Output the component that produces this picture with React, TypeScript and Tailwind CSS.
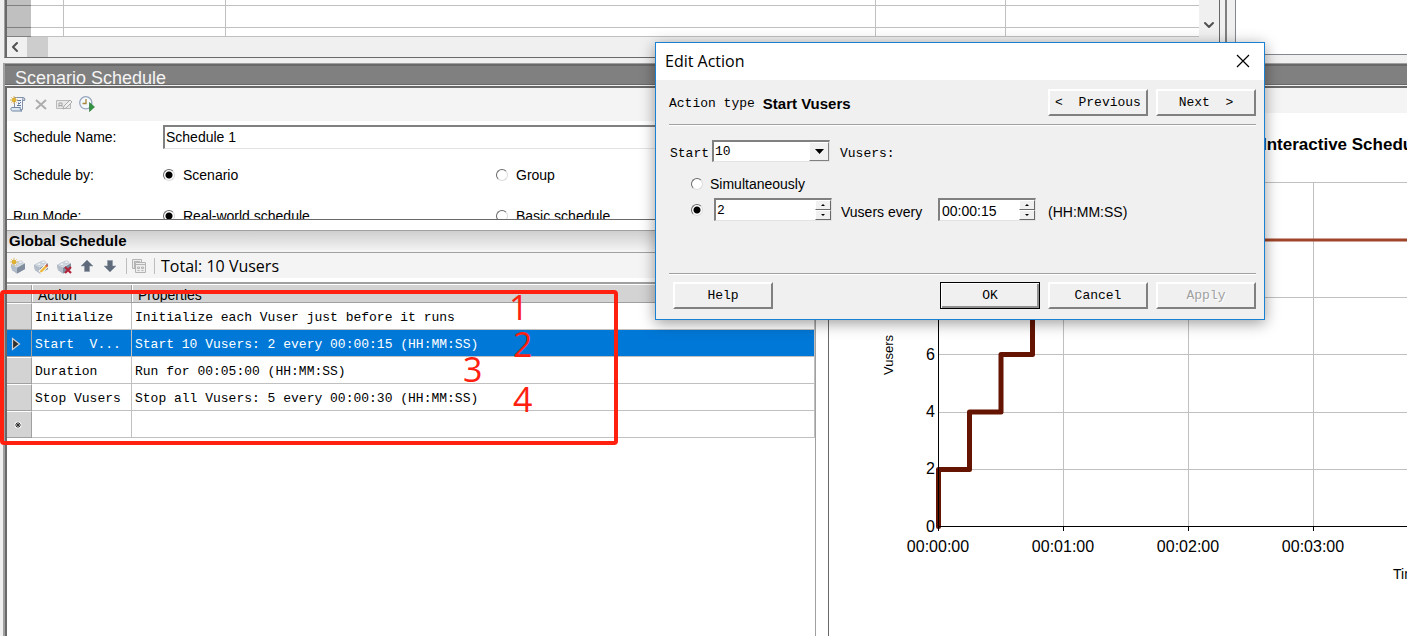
import type { ReactNode } from "react";
import { ChevronDown, ChevronLeft } from "lucide-react";

const mono = "font-['Liberation_Mono',monospace] text-[13px] leading-4";
const raised =
  "border-t-2 border-l-2 border-r-2 border-b-2 border-t-white border-l-white border-r-[#808080] border-b-[#808080]";
const sunken =
  "border-t-2 border-l-2 border-r border-b border-t-[#808080] border-l-[#808080] border-r-[#e3e3e3] border-b-[#e3e3e3]";

const actions = [
  { name: "Initialize", properties: "Initialize each Vuser just before it runs" },
  { name: "Start  V...", properties: "Start 10 Vusers: 2 every 00:00:15 (HH:MM:SS)", selected: true },
  { name: "Duration", properties: "Run for 00:05:00 (HH:MM:SS)" },
  { name: "Stop Vusers", properties: "Stop all Vusers: 5 every 00:00:30 (HH:MM:SS)" },
];

function Star() {
  return (
    <g stroke="#d9a520" strokeWidth="1">
      <path d="M4 0v8M0 4h8M1.4 1.4l5.2 5.2M6.6 1.4L1.4 6.6" stroke="#e0b95a" />
      <circle cx="4" cy="4" r="1.4" fill="#f3c431" />
    </g>
  );
}

function Brick({ children }: { children?: ReactNode }) {
  return (
    <svg width="16" height="16" viewBox="0 0 16 16" fill="none" aria-hidden="true">
      <path d="M1 7l8-4 6 2.500v5.500l-8 4.500-5-3.500z" fill="#8d9bab" />
      <path d="M1 7l8-4 6 2.500-8 4.500z" fill="#d3dae2" />
      <path d="M1 7l6 3v5.500l-5-3.500z" fill="#b3bdc9" />
      <path d="M7 10l8-4.500v5.500l-8 4.500z" fill="#7f8c9d" />
      <ellipse cx="6" cy="6.200" rx="2" ry="1.400" fill="#eef2f6" stroke="#a9b3bf" strokeWidth=".5" />
      <ellipse cx="10.500" cy="4.200" rx="2" ry="1.400" fill="#eef2f6" stroke="#a9b3bf" strokeWidth=".5" />
      {children}
    </svg>
  );
}

function ScrollIcon() {
  return (
    <svg width="16" height="16" viewBox="0 0 16 16" fill="none" aria-hidden="true">
      <path d="M4.500 1.500h9c1.500 0 1.500 3 1 3h-2v9h-8z" fill="#f1f5f9" stroke="#8292ab" />
      <path d="M12.500 4.500v-2c0-1 2-1 2 0v2z" fill="#c5d0de" stroke="#8292ab" strokeWidth=".8" />
      <path d="M2 11.500h8.500c-.8 1.500 0 3.500 1.500 3.500H2.500c-2 0-2-3.500-.5-3.500z" fill="#dde7f1" stroke="#7187a4" />
      <path d="M7 4.500h4M10 6.500h1M7 9.500h4M8 7.500h2M8.500 6.500v2" stroke="#5d7699" />
      <Star />
    </svg>
  );
}

function RenameIcon() {
  return (
    <svg width="16" height="16" viewBox="0 0 16 16" fill="none" aria-hidden="true">
      <path d="M.5 4.500h14v8H.5z" fill="#e8e8e8" stroke="#b9b9b9" />
      <path d="M3 11V7h3v4M3 9.500h3" stroke="#a5a5a5" />
      <path d="M7 13l1-3 6-6 2 2-6 6z" fill="#f0f0f0" stroke="#aaa" />
    </svg>
  );
}

function ClockIcon() {
  return (
    <svg width="16" height="16" viewBox="0 0 16 16" fill="none" aria-hidden="true">
      <circle cx="6.800" cy="6.800" r="6.100" fill="#f4f9fe" stroke="#97a6bd" strokeWidth="1.300" />
      <path d="M7 3v4.500H3.500" stroke="#a5843c" strokeWidth="1.300" />
      <path d="M10.500 6.500l5 4.500-5 4.500z" fill="#2f9440" stroke="#23702f" strokeWidth=".6" />
    </svg>
  );
}

function ArrowIcon({ down }: { down?: boolean }) {
  return (
    <svg width="14" height="14" viewBox="0 0 14 14" className="ml-px" aria-hidden="true">
      <path
        d={down ? "M4.500 1.500h5V7H13l-6 6-6-6h3.500z" : "M4.500 12.500h5V7H13L7 1 1 7h3.500z"}
        fill="#5f6b7b"
        stroke="#8c96a3"
        strokeWidth=".6"
      />
    </svg>
  );
}

function CopyIcon() {
  return (
    <svg width="16" height="16" viewBox="0 0 16 16" fill="none" stroke="#b4b4b4" aria-hidden="true">
      <path d="M1.500 1.500h9v9h-9z" fill="#eee" />
      <path d="M3 3.500h6M3.500 3v7" />
      <path d="M4.500 4.500h10v10h-10z" fill="#eee" />
      <path d="M4.500 6.500h10M6.500 9h2v1.500h-2zM10.500 9h2v1.500h-2zM6.500 12.500h2M10.500 12.500h2" />
    </svg>
  );
}

function ToolButton({ label, children, disabled }: { label: string; children: ReactNode; disabled?: boolean }) {
  return (
    <button type="button" aria-label={label} disabled={disabled} className="flex h-4 w-[23px] items-center">
      {children}
    </button>
  );
}

function Radio({ id, name, checked }: { id: string; name: string; checked?: boolean }) {
  return (
    <input
      id={id}
      name={name}
      type="radio"
      defaultChecked={checked}
      className="m-0 h-3 w-3 shrink-0 appearance-none rounded-full border border-t-[#696969] border-r-[#dcdcdc] border-b-[#dcdcdc] border-l-[#696969] bg-white checked:bg-[radial-gradient(circle,#000_3px,transparent_4px)]"
    />
  );
}

function UpperPanels() {
  return (
    <div className="flex h-[58px] shrink-0 pl-1">
      <div className="flex min-w-0 flex-1 flex-col border-r border-b border-l border-r-[#696969] border-b-[#696969] border-l-[#a0a0a0]">
        <div className="flex min-w-0 flex-1 border-l-2 border-[#696969]">
          <div className="flex min-w-0 flex-1 flex-col">
            <table className="w-full table-fixed border-separate border-spacing-0 bg-white">
              <tbody>
                {["h-[6px]", "h-[22px]", "h-[9px]"].map((height) => (
                  <tr key={height} className={height}>
                    <td className="w-6 border-b border-[#808080] bg-[#c0c0c0] p-0" />
                    <td className="w-[33px] border-r border-b border-[#c0c0c0] p-0" />
                    <td className="w-[162px] border-r border-b border-[#c0c0c0] p-0" />
                    <td className="w-[650px] border-r border-b border-[#c0c0c0] p-0" />
                    <td className="w-[130px] border-r border-b border-[#c0c0c0] p-0" />
                    <td className="border-b border-[#c0c0c0] p-0" />
                  </tr>
                ))}
              </tbody>
            </table>
            <div className="flex flex-1 items-stretch bg-[#f0f0f0]">
              <button type="button" aria-label="Scroll left" className="flex w-5 items-center text-[#505050]">
                <ChevronLeft size={16} strokeWidth={3} />
              </button>
              <div className="w-[21px] bg-[#cdcdcd]" />
            </div>
          </div>
          <div className="flex w-5 items-start justify-center bg-[#f0f0f0] pt-[17px] text-[#505050]">
            <ChevronDown size={16} strokeWidth={3} />
          </div>
        </div>
      </div>
      <div className="ml-[5px] w-2 border-r border-l-2 border-r-[#f0f0f0] border-l-[#808080]" />
      <div className="ml-[2px] h-[55px] w-[172px] border-b border-l border-[#828790] bg-white" />
    </div>
  );
}

function ScheduleForm() {
  return (
    <form className="flex h-[99px] shrink-0 flex-col overflow-hidden border-b border-[#696969] bg-white pt-1 pr-4 pl-[6px] text-[14px] leading-4">
      <div className="flex h-6 shrink-0 items-center">
        <label htmlFor="schedule-name" className="w-[150px]">
          Schedule Name:
        </label>
        <input id="schedule-name" defaultValue="Schedule 1" className={`h-6 min-w-0 flex-1 px-[1px] pb-[2px] ${sunken}`} />
      </div>
      <div className="mt-[14px] flex h-6 shrink-0 items-center">
        <span className="w-[150px]">Schedule by:</span>
        <Radio id="by-scenario" name="by" checked />
        <label htmlFor="by-scenario" className="w-[313px] pl-2">
          Scenario
        </label>
        <span className="w-2" />
        <Radio id="by-group" name="by" />
        <label htmlFor="by-group" className="pl-2">
          Group
        </label>
      </div>
      <div className="mt-[17px] flex h-6 shrink-0 items-center">
        <span className="w-[150px]">Run Mode:</span>
        <Radio id="mode-real" name="mode" checked />
        <label htmlFor="mode-real" className="w-[313px] pl-2">
          Real-world schedule
        </label>
        <span className="w-2" />
        <Radio id="mode-basic" name="mode" />
        <label htmlFor="mode-basic" className="pl-2">
          Basic schedule
        </label>
      </div>
    </form>
  );
}

const headCell = "overflow-hidden border-r border-b border-[#a0a0a0] bg-[#d3d3d3] p-0";
const bodyCell = `border-r border-b border-[#c0c0c0] pt-1 pr-0 pb-0 pl-[3px] whitespace-pre ${mono}`;
const markerCell = "h-[27px] border-t border-r border-b border-r-[#a0a0a0] border-b-[#a0a0a0] p-0";

function ActionTable() {
  return (
    <table className="w-full table-fixed border-separate border-spacing-0 border-t-2 border-[#a0a0a0] pt-[1px] text-left">
      <thead>
        <tr>
          <th className={`w-[25px] ${headCell}`} />
          <th className={`w-[100px] ${headCell}`}>
            <div className="h-[17px] overflow-hidden border-l border-white pl-[5px] text-[14px] leading-5 font-normal">Action</div>
          </th>
          <th className={headCell}>
            <div className="h-[17px] overflow-hidden border-l border-white pl-[5px] text-[14px] leading-5 font-normal">Properties</div>
          </th>
        </tr>
      </thead>
      <tbody>
        {actions.map((row) => (
          <tr key={row.name} className={row.selected ? "bg-[#0078d7] text-white" : "bg-white"}>
            <td className={`${markerCell} ${row.selected ? "border-t-[#0078d7]" : "border-t-white bg-[#d3d3d3]"}`}>
              {row.selected && (
                <svg width="12" height="14" viewBox="0 0 12 14" className="ml-1 block" aria-hidden="true">
                  <path d="M1.500 1.500v11l7-5.500z" fill="#303030" stroke="#d3d3d3" strokeWidth="1.200" />
                </svg>
              )}
            </td>
            <td className={bodyCell}>{row.name}</td>
            <td className={bodyCell}>{row.properties}</td>
          </tr>
        ))}
        <tr>
          <td className={`${markerCell} border-t-white bg-[#d3d3d3]`}>
            <svg width="8" height="8" viewBox="0 0 8 8" className="ml-[7px] block" aria-hidden="true">
              <circle cx="4" cy="4" r="3.500" fill="#f4f4f4" />
              <path d="M4 1v6M1 4h6M2 2l4 4M6 2L2 6" stroke="#303030" />
            </svg>
          </td>
          <td className="border-r border-b border-[#c0c0c0] p-0" />
          <td className="border-r border-b border-[#c0c0c0] p-0" />
        </tr>
      </tbody>
    </table>
  );
}

function Chart() {
  const columns = [938, 1063, 1188, 1313, 1439];
  const rows = [182, 240, 297, 354, 412, 469];
  const times = ["00:00:00", "00:01:00", "00:02:00", "00:03:00", "00:04:00"];
  return (
    <svg
      role="img"
      aria-label="Interactive Schedule Graph"
      className="block h-[500px] w-full overflow-hidden font-['Liberation_Sans',sans-serif]"
    >
      <g transform="translate(-829 -113)">
        <text x="1262" y="150" fontSize="17" fontWeight="bold">
          Interactive Schedule Graph
        </text>
        <g stroke="#c0c0c0" shapeRendering="crispEdges">
          {rows.map((y) => (
            <line key={y} x1="938" x2="2400" y1={y + 0.5} y2={y + 0.5} />
          ))}
          {columns.map((x) => (
            <line key={x} x1={x + 0.5} x2={x + 0.5} y1="182" y2="526" />
          ))}
        </g>
        <path
          d="M938.500 526.500V469.500H969.500V412H1001V354.500H1032.500V297H1063V240"
          fill="none"
          stroke="#641400"
          strokeWidth="5"
          strokeLinecap="round"
          strokeLinejoin="round"
        />
        <path d="M1063 240H2400" stroke="#a0452a" strokeWidth="3" />
        <g stroke="#000" shapeRendering="crispEdges">
          <path d="M938.500 182V531M938 526.500H2400" fill="none" />
          {columns.map((x) => (
            <line key={x} x1={x + 0.5} x2={x + 0.5} y1="526" y2="531" />
          ))}
        </g>
        <g fontSize="16" textAnchor="end">
          <text x="935" y="532">0</text>
          <text x="935" y="474">2</text>
          <text x="935" y="417">4</text>
          <text x="935" y="360">6</text>
        </g>
        <g fontSize="16" textAnchor="middle">
          {times.map((time, i) => (
            <text key={time} x={columns[i]} y="552">
              {time}
            </text>
          ))}
        </g>
        <text transform="translate(893 375) rotate(-90)" fontSize="13">
          Vusers
        </text>
        <text x="1393" y="579" fontSize="14">
          Time
        </text>
      </g>
    </svg>
  );
}

const spinButton =
  "flex flex-1 items-center justify-center border border-t-white border-r-[#696969] border-b-[#696969] border-l-white bg-[#f0f0f0]";

function Spinner({ label }: { label: string }) {
  return (
    <div className="flex w-4 flex-col">
      <button type="button" aria-label={`Increase ${label}`} className={spinButton}>
        <svg width="4" height="2" viewBox="0 0 4 2" aria-hidden="true">
          <path d="M0 2l2-2 2 2z" />
        </svg>
      </button>
      <button type="button" aria-label={`Decrease ${label}`} className={spinButton}>
        <svg width="4" height="2" viewBox="0 0 4 2" aria-hidden="true">
          <path d="M0 0l2 2 2-2z" />
        </svg>
      </button>
    </div>
  );
}

function Rule() {
  return <div className="h-[2px] border-t border-b border-t-[#a0a0a0] border-b-white" />;
}

const dialogButton = `h-[27px] w-[100px] bg-[#f0f0f0] whitespace-pre ${mono} ${raised}`;

function EditActionDialog() {
  return (
    <div
      role="dialog"
      aria-label="Edit Action"
      className="absolute top-[42px] left-[655px] w-[610px] border border-[#1a80d2] bg-[#f0f0f0] shadow-[0_3px_14px_rgba(0,0,0,0.4)]"
    >
      <div className="flex h-[37px] items-center justify-between bg-white pr-[14px] pb-[2px] pl-[9px]">
        <h2 className="font-['Open_Sans',sans-serif] text-[16px] leading-5">Edit Action</h2>
        <button type="button" aria-label="Close">
          <svg width="14" height="14" viewBox="0 0 14 14" aria-hidden="true">
            <path d="M1 1l12 12M13 1L1 13" stroke="#000" strokeWidth="1.200" />
          </svg>
        </button>
      </div>
      <div className="pt-[9px] pr-2 pb-[10px] pl-[13px]">
        <div className="flex items-center gap-2">
          <p className="flex flex-1 items-center gap-2 pt-[2px]">
            <span className={mono}>Action type</span>
            <b className="text-[15px] leading-4">Start Vusers</b>
          </p>
          <button type="button" className={dialogButton}>{"<  Previous"}</button>
          <button type="button" className={dialogButton}>{"Next  >"}</button>
        </div>
        <div className="mt-2">
          <Rule />
        </div>
        <div className="mt-[14px] flex h-[22px] items-center">
          <label htmlFor="vuser-count" className={`w-[43px] pt-[5px] pl-px ${mono}`}>
            Start
          </label>
          <div className={`relative h-[22px] w-[118px] bg-white ${sunken}`}>
            <select id="vuser-count" defaultValue="10" className={`block h-full w-full appearance-none pl-[1px] ${mono}`}>
              <option>10</option>
            </select>
            <span className="pointer-events-none absolute inset-y-0 right-0 flex w-5 items-center justify-center border border-t-white border-r-[#808080] border-b-[#808080] border-l-white bg-[#f0f0f0]">
              <svg width="9" height="5" viewBox="0 0 9 5" aria-hidden="true">
                <path d="M0 0h9L4.500 5z" />
              </svg>
            </span>
          </div>
          <span className={`pt-[5px] pl-[10px] ${mono}`}>Vusers:</span>
        </div>
        <div className="mt-[14px] flex h-4 items-center pl-[22px] text-[14px] leading-4">
          <Radio id="pace-all" name="pace" />
          <label htmlFor="pace-all" className="pl-[7px]">
            Simultaneously
          </label>
        </div>
        <div className="mt-[6px] flex h-[23px] items-center pl-[22px] text-[14px] leading-4">
          <Radio id="pace-step" name="pace" checked />
          <div className={`ml-[11px] flex h-[23px] w-[118px] bg-white ${sunken}`}>
            <input aria-label="Vusers per step" defaultValue="2" className={`min-w-0 flex-1 pt-[2px] pl-[1px] ${mono}`} />
            <Spinner label="Vusers" />
          </div>
          <label htmlFor="pace-step" className="w-[106px] pt-[5px] pl-[9px]">
            Vusers every
          </label>
          <div className={`flex h-[23px] w-[98px] bg-white ${sunken}`}>
            <input aria-label="Interval" defaultValue="00:00:15" className="min-w-0 flex-1 pt-[2px] pl-[2px]" />
            <Spinner label="interval" />
          </div>
          <span className="pt-[5px] pl-3">(HH:MM:SS)</span>
        </div>
        <div className="mt-[52px]">
          <Rule />
        </div>
        <div className="mt-[7px] flex gap-2 pl-1">
          <button type="button" className={dialogButton}>Help</button>
          <span className="flex-1" />
          <button
            type="button"
            className={`h-[27px] w-[100px] border border-black bg-[#f0f0f0] shadow-[inset_1px_1px_#fff,inset_-2px_-2px_#909090] ${mono}`}
          >
            OK
          </button>
          <button type="button" className={dialogButton}>Cancel</button>
          <button type="button" disabled className={`text-[#a0a0a0] [text-shadow:1px_1px_#fff] ${dialogButton}`}>
            Apply
          </button>
        </div>
      </div>
    </div>
  );
}

function Annotations() {
  const digit = "pointer-events-none absolute font-['Open_Sans',sans-serif] text-[34px] leading-6 text-[#ff2010]";
  return (
    <>
      <div className="pointer-events-none absolute top-[290px] left-0 h-[155px] w-[618px] rounded-[4px] border-4 border-[#ff2010]" />
      <span className={`top-[295px] left-[509px] ${digit}`}>1</span>
      <span className={`top-[332px] left-[513px] ${digit}`}>2</span>
      <span className={`top-[357px] left-[463px] ${digit}`}>3</span>
      <span className={`top-[387px] left-[513px] ${digit}`}>4</span>
    </>
  );
}

export default function App() {
  return (
    <div className="relative flex h-screen flex-col overflow-hidden bg-[#f0f0f0] font-['Liberation_Sans',sans-serif] text-black">
      <UpperPanels />
      <div className="mt-[5px] ml-[3px] flex min-h-0 flex-1 flex-col border-t border-l-2 border-[#a0a0a0]">
        <h1 className="h-[21px] shrink-0 overflow-hidden border-t-2 border-b border-[#696969] bg-[#808080] pl-[10px] text-[18px] leading-6 text-[#f4f4f4]">
          Scenario Schedule
        </h1>
        <div className="mt-[1px] flex min-h-0 flex-1 border-t-2 border-l-2 border-[#696969] bg-white">
          <div className="flex min-w-0 flex-[809_1_0px] flex-col border-r border-[#a0a0a0]">
            <div className="flex h-[33px] shrink-0 items-center bg-[#f4f4f4] pb-[2px] pl-[3px]">
              <ToolButton label="New schedule">
                <ScrollIcon />
              </ToolButton>
              <ToolButton label="Delete schedule" disabled>
                <svg width="15" height="16" viewBox="0 0 15 16" aria-hidden="true">
                  <path d="M3 4l10 9M13 4L3 13" stroke="#adadad" strokeWidth="2" />
                </svg>
              </ToolButton>
              <ToolButton label="Rename schedule" disabled>
                <RenameIcon />
              </ToolButton>
              <ToolButton label="Start time">
                <ClockIcon />
              </ToolButton>
            </div>
            <ScheduleForm />
            <h2 className="mt-[10px] h-[23px] shrink-0 border-t border-b border-[#a0a0a0] bg-linear-to-b from-[#cfcfcf] to-[#f6f6f6] pl-[2px] text-[15px] leading-5 font-bold">
              Global Schedule
            </h2>
            <div className="mb-1 flex h-[25px] shrink-0 items-center bg-[#f4f4f4] pl-[3px]">
              <ToolButton label="Add action">
                <Brick>
                  <Star />
                </Brick>
              </ToolButton>
              <ToolButton label="Edit action">
                <Brick>
                  <path d="M7 14.500l7-7" stroke="#fff" strokeWidth="4" />
                  <path d="M7.500 14l6.500-6.500" stroke="#edb83a" strokeWidth="2.400" />
                  <path d="M13 8.500l1.500-1.500" stroke="#d65c4c" strokeWidth="2.400" />
                </Brick>
              </ToolButton>
              <ToolButton label="Delete action">
                <Brick>
                  <path d="M9 9l6 6M15 9l-6 6" stroke="#b3233a" strokeWidth="2.200" />
                </Brick>
              </ToolButton>
              <ToolButton label="Move up">
                <ArrowIcon />
              </ToolButton>
              <ToolButton label="Move down">
                <ArrowIcon down />
              </ToolButton>
              <span className="mr-1 ml-px h-4 w-px bg-[#bdbdbd]" />
              <ToolButton label="Copy" disabled>
                <CopyIcon />
              </ToolButton>
              <span className="h-4 w-px bg-[#bdbdbd]" />
              <span className="pl-[6px] font-['Open_Sans',sans-serif] text-[16px] leading-5">Total: 10 Vusers</span>
            </div>
            <ActionTable />
          </div>
          <div className="ml-3 flex min-w-0 flex-[579_1_0px] flex-col border-l border-[#696969]">
            <div className="h-[25px] shrink-0 bg-[#f4f4f4]" />
            <Chart />
          </div>
        </div>
      </div>
      <EditActionDialog />
      <Annotations />
    </div>
  );
}
